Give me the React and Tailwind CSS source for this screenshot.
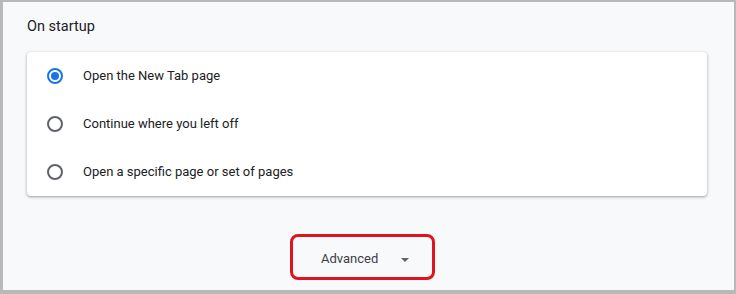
const options = [
  { id: "newtab", label: "Open the New Tab page", checked: true },
  { id: "continue", label: "Continue where you left off", checked: false },
  { id: "specific", label: "Open a specific page or set of pages", checked: false },
];

const Radio = ({ checked }) => (
  <span
    className={`flex h-[16px] w-[16px] shrink-0 items-center justify-center rounded-full border-2 ${
      checked ? "border-[#1a73e8]" : "border-[#5f6368]"
    }`}
  >
    {checked && <span className="h-[8px] w-[8px] rounded-full bg-[#1a73e8]" />}
  </span>
);

export default function App() {
  return (
    <div
      className="h-[294px] w-[736px] overflow-hidden border-t-2 border-l-[3px] border-r-2 border-b-4 border-[#b9b9b9] bg-[#f8f9fa] pl-[24px] pr-[27px] text-[13px] text-[#202124]"
      style={{ fontFamily: "Roboto, 'Liberation Sans', sans-serif" }}
    >
      <h2 className="pt-[15px] text-[14.5px] font-normal leading-[20px]">On startup</h2>

      <div className="mt-[15px] rounded-[4px] bg-white shadow-[0_1px_2px_rgba(60,64,67,0.3),0_1px_3px_1px_rgba(60,64,67,0.15)]">
        {options.map((option) => (
          <label
            key={option.id}
            className="flex h-[48px] items-center gap-[20px] pl-[20px]"
          >
            <Radio checked={option.checked} />
            <span>{option.label}</span>
          </label>
        ))}
      </div>

      <div className="mt-[38px] pl-[263px]">
        <button className="flex h-[46px] w-[145px] items-center rounded-[8px] border-[3px] border-[#e0141e] pl-[28px] pt-[4px] text-[13px] text-[#3c4043]">
          <span>Advanced</span>
          <svg width="8" height="4" viewBox="0 0 8 4" className="ml-[23px] mt-[2px]">
            <path d="M0 0 L8 0 L4 4 Z" fill="#5f6368" />
          </svg>
        </button>
      </div>
    </div>
  );
}
